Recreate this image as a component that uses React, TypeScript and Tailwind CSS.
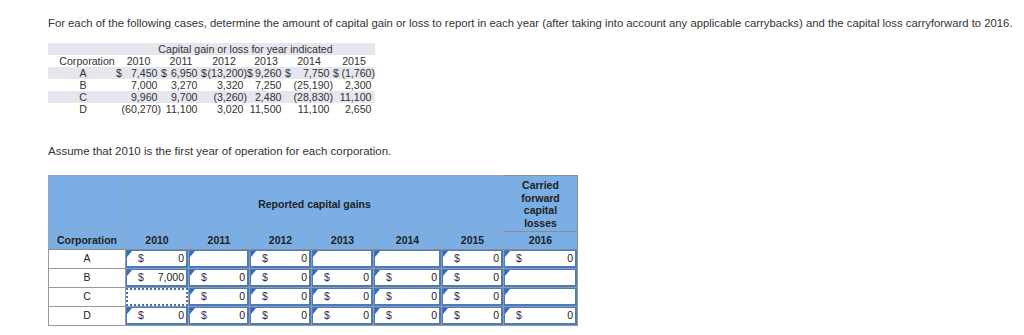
const font = { fontFamily: '"Liberation Sans", Arial, sans-serif' }

type Val = { d: string; n: string } | null

const given = [
    { c: "A", v: [["$", "7,450"], ["$", "6,950"], ["$", "(13,200)"], ["$", "9,260"], ["$", "7,750"], ["$", "(1,760)"]] },
    { c: "B", v: [["", "7,000"], ["", "3,270"], ["", "3,320"], ["", "7,250"], ["", "(25,190)"], ["", "2,300"]] },
    { c: "C", v: [["", "9,960"], ["", "9,700"], ["", "(3,260)"], ["", "2,480"], ["", "(28,830)"], ["", "11,100"]] },
    { c: "D", v: [["", "(60,270)"], ["", "11,100"], ["", "3,020"], ["", "11,500"], ["", "11,100"], ["", "2,650"]] },
]

const z: Val = { d: "$", n: "0" }
const rows: { c: string; v: Val[] }[] = [
    { c: "A", v: [z, null, z, null, null, z, z] },
    { c: "B", v: [{ d: "$", n: "7,000" }, z, z, z, z, z, null] },
    { c: "C", v: [null, z, z, z, z, z, null] },
    { c: "D", v: [z, z, z, z, z, z, z] },
]

const years = ["2010", "2011", "2012", "2013", "2014", "2015"]

function Num({ n }: { n: string }) {
    const neg = n.startsWith("(")
    return (
        <span>
            {n}
            {!neg && <span className="invisible">)</span>}
        </span>
    )
}

function InputCell({ v, dotted }: { v: Val; dotted?: boolean }) {
    return (
        <td className="border border-[#9a9a9a] p-0 h-[19px]">
            <div
                className={
                    dotted
                        ? "relative h-[18px] border-2 border-dotted border-[#3b73c4] bg-white"
                        : "relative h-[18px] border border-[#4a7bbf] border-b-2 border-r-2 bg-white flex items-center justify-between pl-[11px] pr-[2px]"
                }
            >
                {!dotted && <span className="absolute left-0 top-0 w-0 h-0 border-t-[6px] border-t-[#2d6cc3] border-r-[5px] border-r-transparent" />}
                {v && (
                    <>
                        <span className="text-[#3a2a55]">{v.d}</span>
                        <span>{v.n}</span>
                    </>
                )}
            </div>
        </td>
    )
}

export default function App() {
    return (
        <div className="w-[1024px] h-[335px] bg-white text-[#333] px-[48px] pt-[16px]" style={font}>
            <p className="text-[11.3px] leading-[14px] whitespace-nowrap">
                For each of the following cases, determine the amount of capital gain or loss to report in each year (after taking into account any applicable carrybacks) and the capital loss carryforward to 2016.
            </p>

            <table className="mt-[13px] table-fixed border-collapse text-[10.6px] leading-[12px] text-[#333]">
                <colgroup>
                    <col className="w-[68px]" />
                    <col className="w-[45px]" />
                    <col className="w-[40px]" />
                    <col className="w-[46px]" />
                    <col className="w-[38px]" />
                    <col className="w-[48px]" />
                    <col className="w-[42px]" />
                </colgroup>
                <tbody>
                    <tr className="bg-[#e6e6ee] h-[12px]">
                        <td className="p-0" />
                        <td colSpan={6} className="p-0 text-center">Capital gain or loss for year indicated</td>
                    </tr>
                    <tr className="h-[12px]">
                        <td className="p-0 text-center pl-[10px]">Corporation</td>
                        {years.map((y) => (
                            <td key={y} className="p-0 text-center">{y}</td>
                        ))}
                    </tr>
                    {given.map((r, i) => (
                        <tr key={r.c} className={i % 2 === 0 ? "bg-[#e6e6ee] h-[12px]" : "h-[12px]"}>
                            <td className="p-0 text-center pl-[2px]">{r.c}</td>
                            {r.v.map(([d, n], j) => (
                                <td key={j} className="p-0">
                                    <div className="flex justify-between whitespace-nowrap">
                                        <span>{d}</span>
                                        <Num n={n} />
                                    </div>
                                </td>
                            ))}
                        </tr>
                    ))}
                </tbody>
            </table>

            <p className="mt-[29px] text-[11.5px] leading-[14px]">Assume that 2010 is the first year of operation for each corporation.</p>

            <table className="mt-[17px] table-fixed border-collapse border border-[#8c8c8c] text-[10.5px] text-[#222]">
                <colgroup>
                    <col className="w-[77px]" />
                    <col className="w-[63px]" />
                    <col className="w-[61px]" />
                    <col className="w-[62px]" />
                    <col className="w-[62px]" />
                    <col className="w-[68px]" />
                    <col className="w-[62px]" />
                    <col className="w-[74px]" />
                </colgroup>
                <thead className="bg-[#7aaee5] font-bold">
                    <tr className="h-[56px]">
                        <th className="border border-[#8fa9c8]" />
                        <th colSpan={6} className="border border-[#8fa9c8] font-bold pt-[2px]">Reported capital gains</th>
                        <th className="border border-[#8c8c8c] font-bold leading-[12.5px] pt-[1px]">
                            Carried<br />forward<br />capital<br />losses
                        </th>
                    </tr>
                    <tr className="h-[18px]">
                        <th className="border border-[#8fa9c8] border-b-[#8c8c8c] font-bold">Corporation</th>
                        {years.map((y) => (
                            <th key={y} className="border border-[#8fa9c8] border-b-[#8c8c8c] font-bold">{y}</th>
                        ))}
                        <th className="border border-[#8c8c8c] font-bold">2016</th>
                    </tr>
                </thead>
                <tbody className="bg-white">
                    {rows.map((r) => (
                        <tr key={r.c}>
                            <td className="border border-[#9a9a9a] text-center h-[19px] p-0">{r.c}</td>
                            {r.v.map((v, j) => (
                                <InputCell key={j} v={v} dotted={r.c === "C" && j === 0} />
                            ))}
                        </tr>
                    ))}
                </tbody>
            </table>
        </div>
    )
}
